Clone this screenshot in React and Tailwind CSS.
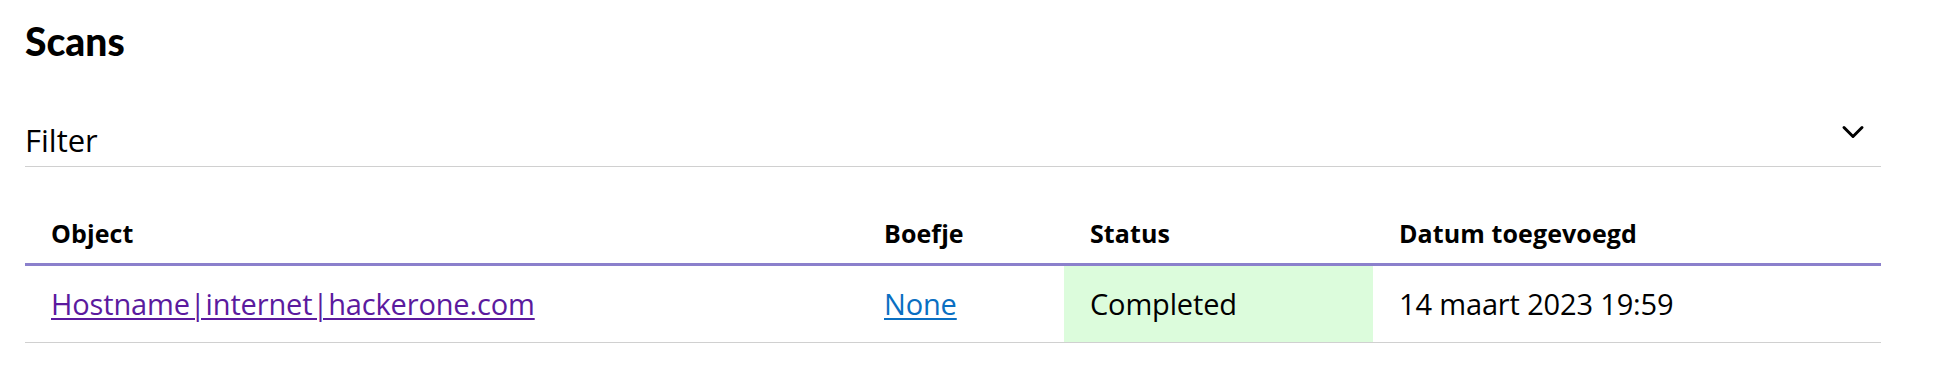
import { ChevronDown } from 'lucide-react';

const columns = ['Object', 'Boefje', 'Status', 'Datum toegevoegd'];

const scans = [
  {
    object: 'Hostname|internet|hackerone.com',
    boefje: 'None',
    status: 'Completed',
    date: '14 maart 2023 19:59'
  }
];

const App = () => (
  <div className="min-h-[386px] bg-white pl-[25px] pr-[55px] pt-[22px] font-['Open_Sans',sans-serif] text-black">
    <h1 className="font-['Lato',sans-serif] text-[39px] font-black leading-none">Scans</h1>

    <div className="mt-[61px] flex items-start justify-between border-b border-[#d0d0d0] pb-[8px]">
      <span className="text-[31px] leading-[36px]">Filter</span>
      <ChevronDown size={36} strokeWidth={2} className="-mt-[8px] mr-[10px] text-black" />
    </div>

    <div className="mt-[38px] grid grid-cols-[833px_206px_309px_1fr]">
      {columns.map((col) => (
        <div key={col} className="border-b-[3px] border-[#8b80cc] pl-[26px] pt-[11px] pb-[13px] text-[25px] font-bold leading-[34px] tracking-[0.1px]">
          {col}
        </div>
      ))}

      {scans.map((scan) => (
        <div key={scan.object} className="contents">
          <div className="border-b border-[#d0d0d0] py-[18px] pl-[26px] text-[29px] leading-[40px] tracking-[-0.15px]">
            <a href="#" className="text-[#5b1a9e] underline decoration-2 underline-offset-[3px]">{scan.object}</a>
          </div>
          <div className="border-b border-[#d0d0d0] py-[18px] pl-[26px] text-[29px] leading-[40px] tracking-[-0.15px]">
            <a href="#" className="text-[#0a6fc2] underline decoration-2 underline-offset-[3px]">{scan.boefje}</a>
          </div>
          <div className="border-b border-[#d0d0d0] bg-[#dcfcdc] py-[18px] pl-[26px] text-[29px] leading-[40px] tracking-[-0.15px]">
            {scan.status}
          </div>
          <div className="border-b border-[#d0d0d0] py-[18px] pl-[26px] text-[29px] leading-[40px] tracking-[-0.15px]">
            {scan.date}
          </div>
        </div>
      ))}
    </div>
  </div>
);

export default App;
